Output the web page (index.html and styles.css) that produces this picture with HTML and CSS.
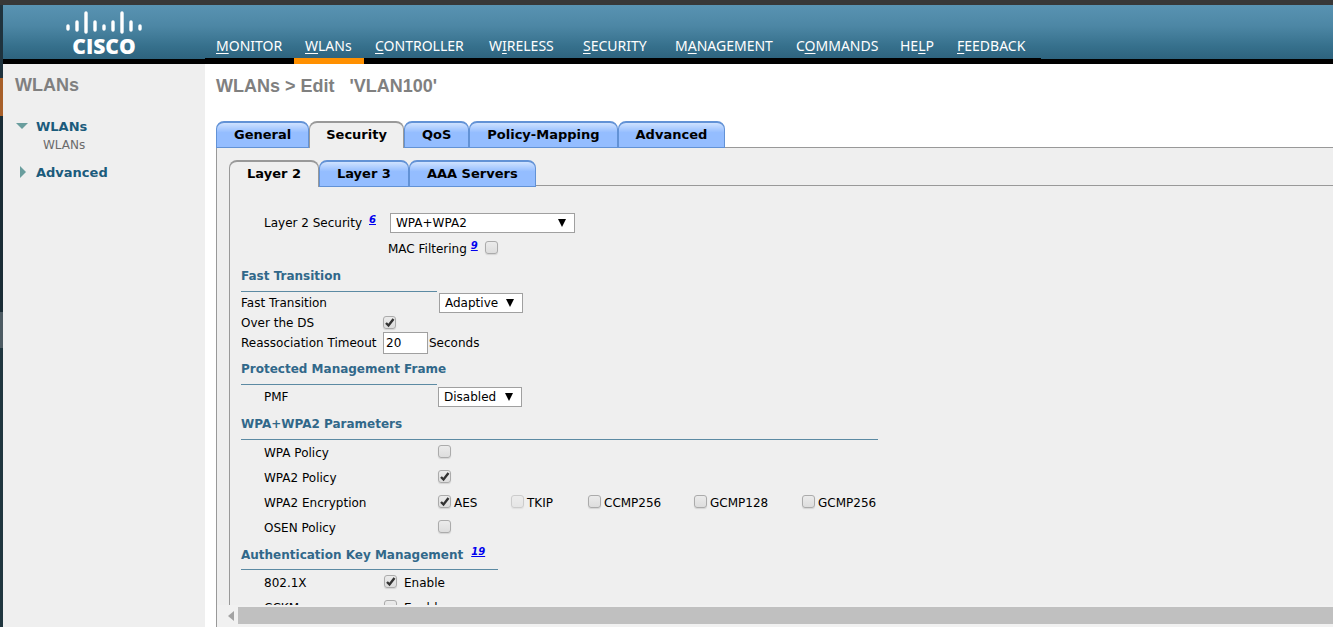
FILE: index.html
```
<!DOCTYPE html>
<html lang="en">
    <head>
        <meta charset="utf-8">
        <title>WLANs</title>
        <link rel="stylesheet" href="styles.css">
    </head>
    <body>
        <div class="topbar"></div>
        <div class="window">
            <div class="edge"></div>
            <div class="app">
                <header class="header">
                    <a class="logo" href="#" aria-label="Cisco">
                        <svg class="bars" width="78" height="24" viewBox="0 0 78 24" stroke="#fff" stroke-width="3.4" stroke-linecap="round">
                            <path d="M3 15v3M12 11v8M21 2v19M30 11v8M39 15v3M48 11v8M57 2v19M66 11v8M75 15v3"/>
                        </svg>
                        <span class="brand">CISCO</span>
                    </a>
                    <nav class="menu">
                        <a href="#"><u>M</u>ONITOR</a>
                        <a href="#" class="current"><u>W</u>LANs</a>
                        <a href="#"><u>C</u>ONTROLLER</a>
                        <a href="#">W<u>I</u>RELESS</a>
                        <a href="#"><u>S</u>ECURITY</a>
                        <a href="#">M<u>A</u>NAGEMENT</a>
                        <a href="#">C<u>O</u>MMANDS</a>
                        <a href="#">HE<u>L</u>P</a>
                        <a href="#"><u>F</u>EEDBACK</a>
                    </nav>
                </header>

                <div class="body">
                    <aside class="sidebar">
                        <h2>WLANs</h2>
                        <ul class="tree">
                            <li>
                                <svg width="13" height="12" viewBox="0 0 13 12"><path d="M0 3h12l-6 6z" fill="#6a9e9e"/></svg>
                                <a href="#">WLANs</a>
                            </li>
                            <li class="sub"><a href="#">WLANs</a></li>
                            <li>
                                <svg width="13" height="12" viewBox="0 0 13 12"><path d="M4 0l6 6-6 6z" fill="#6a9e9e"/></svg>
                                <a href="#">Advanced</a>
                            </li>
                        </ul>
                    </aside>

                    <main class="content">
                        <h1>WLANs &gt; Edit &nbsp; 'VLAN100'</h1>
                        <div class="tabs">
                            <button type="button">General</button>
                            <button type="button" class="active">Security</button>
                            <button type="button">QoS</button>
                            <button type="button">Policy-Mapping</button>
                            <button type="button">Advanced</button>
                        </div>
                        <div class="panel">
                            <div class="tabs inner">
                                <button type="button" class="active">Layer 2</button>
                                <button type="button">Layer 3</button>
                                <button type="button">AAA Servers</button>
                            </div>
                            <form class="panel form">
                                <div class="row indent">
                                    <label class="short" for="l2sec">Layer 2 Security<a class="note" href="#">6</a></label>
                                    <select id="l2sec" class="wide"><option>WPA+WPA2</option></select>
                                </div>
                                <div class="row mac">
                                    <label for="mac">MAC Filtering<a class="note" href="#">9</a></label>
                                    <input type="checkbox" id="mac">
                                </div>

                                <h3>Fast Transition</h3>
                                <div class="row medium">
                                    <label for="ft">Fast Transition</label>
                                    <select id="ft"><option>Adaptive</option></select>
                                </div>
                                <div class="row small">
                                    <label class="timeout" for="ds">Over the DS</label>
                                    <input type="checkbox" id="ds" checked>
                                </div>
                                <div class="row medium">
                                    <label class="timeout" for="timeout">Reassociation Timeout</label>
                                    <input type="text" id="timeout" value="20">
                                    <span>Seconds</span>
                                </div>

                                <h3>Protected Management Frame</h3>
                                <div class="row indent pmf">
                                    <label for="pmf">PMF</label>
                                    <select id="pmf"><option>Disabled</option></select>
                                </div>

                                <h3 class="full">WPA+WPA2 Parameters</h3>
                                <div class="row indent">
                                    <label for="wpa">WPA Policy</label>
                                    <input type="checkbox" id="wpa">
                                </div>
                                <div class="row indent">
                                    <label for="wpa2">WPA2 Policy</label>
                                    <input type="checkbox" id="wpa2" checked>
                                </div>
                                <div class="row indent">
                                    <span class="label">WPA2 Encryption</span>
                                    <div class="ciphers">
                                        <label><input type="checkbox" checked>AES</label>
                                        <label><input type="checkbox" disabled>TKIP</label>
                                        <label><input type="checkbox">CCMP256</label>
                                        <label><input type="checkbox">GCMP128</label>
                                        <label><input type="checkbox">GCMP256</label>
                                    </div>
                                </div>
                                <div class="row indent">
                                    <label for="osen">OSEN Policy</label>
                                    <input type="checkbox" id="osen">
                                </div>

                                <h3 class="akm">Authentication Key Management<a class="note" href="#">19</a></h3>
                                <div class="row indent">
                                    <span class="label key">802.1X</span>
                                    <label class="enable"><input type="checkbox" checked>Enable</label>
                                </div>
                                <div class="row indent">
                                    <span class="label key">CCKM</span>
                                    <label class="enable"><input type="checkbox">Enable</label>
                                </div>
                            </form>
                        </div>
                        <div class="scrollbar">
                            <button type="button" aria-label="Scroll left">
                                <svg width="6" height="10" viewBox="0 0 6 10"><path d="M6 0v10L0 5z" fill="#a3a3a3"/></svg>
                            </button>
                            <div class="thumb"></div>
                        </div>
                    </main>
                </div>
            </div>
        </div>
    </body>
</html>
```
FILE: styles.css
```
* {
    box-sizing: border-box;
}
body {
    display: flex;
    flex-direction: column;
    height: 100vh;
    margin: 0;
    overflow: hidden;
    font-family: "DejaVu Sans", Verdana, sans-serif;
    font-size: 12px;
    color: #000000;
    background: #ffffff;
}
a {
    text-decoration: none;
}
.topbar {
    flex: none;
    height: 5px;
    background: #383838;
}
.window {
    display: flex;
    flex: 1;
    min-height: 0;
}
.edge {
    flex: none;
    width: 3px;
    background: linear-gradient(#1f333e 73px, #a8602a 73px, #a8602a 111px, #1b2d36 111px, #1b2d36 307px, #4d5b63 307px, #4d5b63 343px, #20363f 343px);
}
.app {
    display: flex;
    flex-direction: column;
    flex: 1;
    min-width: 0;
}

/* header */
.header {
    display: flex;
    flex: none;
    height: 59px;
    background: linear-gradient(#5993b2, #4d87a5 35%, #36708c 70%, #2e637e 54px, #000000 54px);
}
.logo {
    display: flex;
    flex: none;
    flex-direction: column;
    align-items: center;
    width: 202px;
    padding-top: 6px;
    color: #ffffff;
}
.bars {
    flex: none;
}
.brand {
    font: 800 21px/22px "Open Sans", sans-serif;
}
.menu {
    display: grid;
    grid-template-columns: 89px 70px 114px 94px 92px 121px 104px 57px 95px;
    align-self: flex-end;
}
.menu a {
    height: 29px;
    padding: 0 11px;
    border-bottom: 6px solid #000000;
    font: 14px/22px "Noto Sans", Tahoma, sans-serif;
    color: #ffffff;
}
.menu a.current {
    border-color: #ff9000;
}
.menu u {
    text-underline-offset: 2px;
}

/* left navigation */
.body {
    display: flex;
    flex: 1;
    min-height: 0;
}
.sidebar {
    flex: none;
    width: 202px;
    padding: 10px 12px;
    background: #efefef;
}
h1, h2 {
    margin: 0;
    font: bold 18px/22px "Liberation Sans", Arial, sans-serif;
    color: #808080;
}
.tree {
    margin: 20px 0 0;
    padding: 0;
    list-style: none;
}
.tree li {
    display: flex;
    align-items: center;
    gap: 7px;
    height: 20px;
    padding-left: 1px;
    font-size: 13px;
    font-weight: bold;
}
.tree a {
    color: #1b5b7c;
}
.tree .sub {
    height: 17px;
    margin-bottom: 9px;
    padding-left: 28px;
    font-size: 12px;
    font-weight: normal;
}
.tree .sub a {
    color: #6b6b6b;
}

/* tabs */
.content {
    display: flex;
    flex-direction: column;
    flex: 1;
    min-width: 0;
    padding: 11px 0 0 11px;
}
h1 {
    margin-bottom: 24px;
}
.tabs {
    position: relative;
    z-index: 1;
    display: flex;
    flex: none;
    height: 27px;
    margin-bottom: -1px;
}
.tabs.inner {
    margin-bottom: -2px;
}
.tabs button {
    padding: 0 17px 1px;
    border: 1px solid #6292d6;
    border-top-width: 2px;
    border-radius: 8px 8px 0 0;
    background: linear-gradient(#cfe2ff, #94bdff 40%);
    font: bold 13px "DejaVu Sans", Verdana, sans-serif;
    color: #000000;
}
.tabs .active {
    padding: 0 16px 2px;
    border-color: #999999;
    border-bottom: 0;
    background: #efefef;
}
.tabs.inner .active {
    padding: 0 17px 2px;
}
.panel {
    display: flex;
    flex-direction: column;
    flex: 1;
    min-height: 0;
    overflow: hidden;
    padding: 12px 0 0 12px;
    border: 1px solid #999999;
    border-width: 1px 0 0 1px;
    background: #efefef;
}

/* security form */
.form {
    display: block;
    padding: 24px 0 0 11px;
}
h3 {
    width: 196px;
    height: 31px;
    margin: 0;
    border-bottom: 1px solid #5c8aa3;
    font-size: 12px;
    line-height: 30px;
    white-space: nowrap;
    color: #31688a;
}
h3.full {
    width: 637px;
}
h3.akm {
    width: 257px;
    height: 30px;
}
.row {
    display: flex;
    align-items: center;
    height: 25px;
    white-space: nowrap;
}
.row > label:first-child,
.row > .label {
    flex: none;
    width: 198px;
}
.row.indent {
    padding-left: 23px;
}
.row.indent > label:first-child,
.row.indent > .label {
    width: 174px;
}
.row.medium {
    height: 22px;
}
.row.small {
    height: 18px;
}
.row.pmf {
    height: 24px;
}
.row.mac {
    gap: 7px;
    height: 26px;
    padding-left: 147px;
}
.row.mac > label:first-child {
    width: auto;
}
.row.indent > label.short:first-child {
    width: 126px;
}
.row > label.timeout:first-child {
    width: 142px;
}
.row.indent > .label.key {
    width: 120px;
}
.note {
    margin-left: 4px;
    vertical-align: 4px;
    font-size: 10px;
    font-style: italic;
    font-weight: bold;
    line-height: 10px;
    text-decoration: underline;
    color: #0000ee;
}
.short .note {
    margin-left: 7px;
}
h3 .note {
    margin-left: 8px;
}
.ciphers {
    display: grid;
    grid-template-columns: 73px 77px 106px 108px 80px;
}
.ciphers label,
.enable {
    display: flex;
    align-items: center;
    gap: 3px;
}
.enable {
    gap: 7px;
}
select {
    appearance: none;
    width: 84px;
    height: 20px;
    padding: 0 5px;
    border: 1px solid #a0a0a0;
    border-radius: 0;
    background: #ffffff url("data:image/svg+xml,%3Csvg xmlns='http://www.w3.org/2000/svg' width='8' height='8'%3E%3Cpath d='M0 0h8L4 8z'/%3E%3C/svg%3E") no-repeat right 8px center;
    font: 12px "DejaVu Sans", Verdana, sans-serif;
    color: #000000;
}
select.wide {
    width: 185px;
}
input[type="text"] {
    width: 45px;
    height: 22px;
    margin: 0 1px 0 0;
    padding: 0 2px;
    border: 1px solid #a0a0a0;
    font: 12px "DejaVu Sans", Verdana, sans-serif;
}
input[type="checkbox"] {
    appearance: none;
    flex: none;
    width: 13px;
    height: 13px;
    margin: 0 0 2px;
    border: 1px solid #ababab;
    border-radius: 3px;
    background: linear-gradient(#ebebeb, #dddddd);
    box-shadow: 0 1px 1px #d4d4d4;
}
input[type="checkbox"]:checked {
    background: url("data:image/svg+xml,%3Csvg xmlns='http://www.w3.org/2000/svg' width='11' height='11'%3E%3Cpath d='M2 6l2.5 2.5L9.5 2' fill='none' stroke='%23333' stroke-width='2.4'/%3E%3C/svg%3E") no-repeat center, linear-gradient(#ebebeb, #dddddd);
}
input[type="checkbox"]:disabled {
    opacity: 0.5;
}

/* horizontal scrollbar */
.scrollbar {
    display: flex;
    flex: none;
    height: 22px;
    padding: 2px 0 3px;
    border-left: 1px solid #999999;
    background: #f1f1f1;
}
.scrollbar button {
    width: 21px;
    padding: 0 0 0 7px;
    border: 0;
    background: none;
    line-height: 0;
}
.thumb {
    flex: 1;
    background: #c0c0c0;
}
```
